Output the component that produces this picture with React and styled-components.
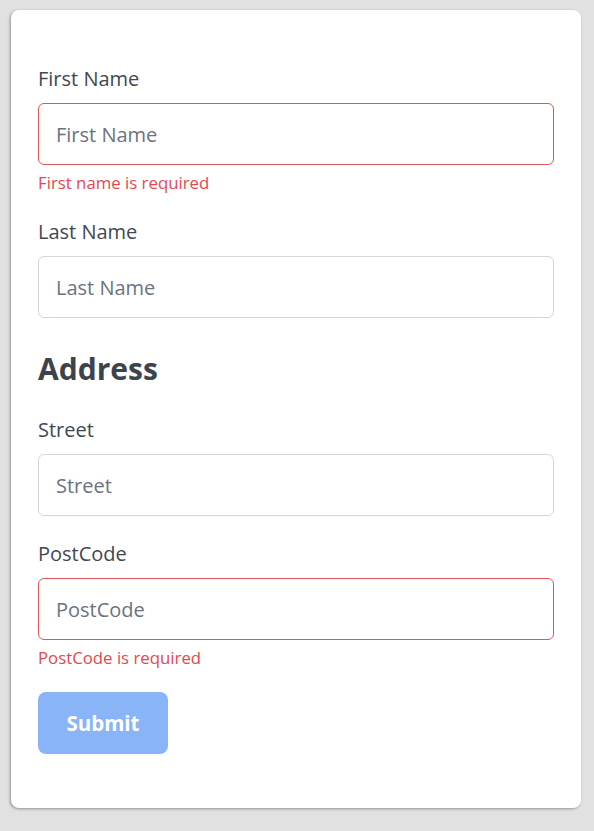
import React from 'react'
import styled, { createGlobalStyle } from 'styled-components'

const GlobalStyle = createGlobalStyle`
  html, body {
    margin: 0;
    background: #e1e1e1;
  }
  body {
    font-family: 'Open Sans', 'Noto Sans', sans-serif;
    padding: 10px 13px 23px 11px;
  }
`

const Card = styled.form`
  background: #ffffff;
  border-radius: 8px;
  box-shadow: -1px 1px 3px rgba(0, 0, 0, 0.35);
  padding: 54px 27px;
  display: flex;
  flex-direction: column;
`

const Field = styled.div`
  display: flex;
  flex-direction: column;
  margin-bottom: 23px;
`

const Label = styled.label`
  font-size: 20px;
  line-height: 30px;
  color: #414852;
  margin-bottom: 9px;
`

const Input = styled.input`
  box-sizing: border-box;
  height: 62px;
  width: 100%;
  border: 1px solid ${p => (p.$invalid ? '#e05555' : '#d3d6db')};
  border-radius: 6px;
  padding: 0 17px;
  font-family: inherit;
  font-size: 20px;
  color: #374151;
  outline: none;
  background: #fff;

  &::placeholder {
    color: #6b7280;
  }
`

const ErrorText = styled.span`
  font-size: 16.8px;
  line-height: 22px;
  color: #e5484d;
  margin-top: 7px;
`

const Heading = styled.h2`
  margin: 10px 0 28px;
  font-size: 30px;
  line-height: 36px;
  font-weight: 700;
  color: #3d434d;
`

const SubmitButton = styled.button`
  align-self: flex-start;
  width: 130px;
  height: 62px;
  margin-top: 0;
  border: none;
  border-radius: 8px;
  background: #8ab4f8;
  color: #ffffff;
  font-family: inherit;
  font-size: 20.5px;
  font-weight: 700;
  cursor: not-allowed;
`

const TextField = ({ label, error }) => (
  <Field>
    <Label>{label}</Label>
    <Input placeholder={label} $invalid={!!error} />
    {error && <ErrorText>{error}</ErrorText>}
  </Field>
)

const App = () => (
  <>
    <GlobalStyle />
    <Card onSubmit={e => e.preventDefault()}>
      <TextField label="First Name" error="First name is required" />
      <TextField label="Last Name" />
      <Heading>Address</Heading>
      <TextField label="Street" />
      <TextField label="PostCode" error="PostCode is required" />
      <SubmitButton type="submit">Submit</SubmitButton>
    </Card>
  </>
)

export default App
